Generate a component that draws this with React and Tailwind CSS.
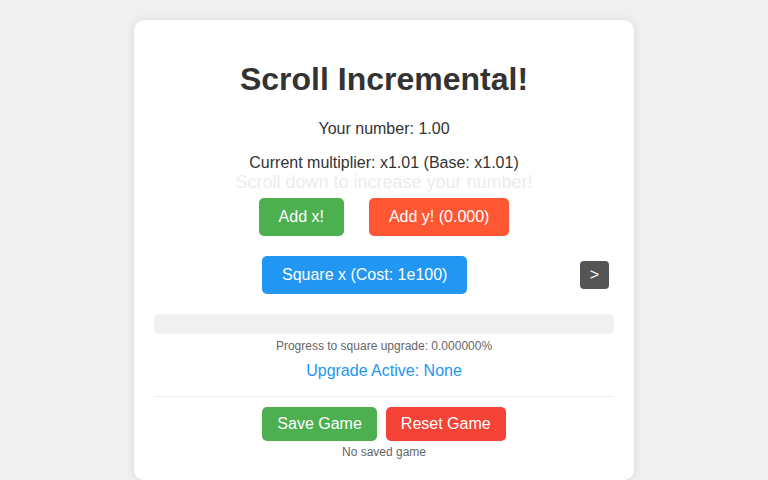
export default function App() {
    return (
        <div className="min-h-screen bg-[#f0f0f0] flex justify-center pt-5 font-['Liberation_Sans',Arial,sans-serif] text-[#333]">
            <div className="w-[500px] h-[460px] bg-white rounded-[10px] shadow-[0_0_10px_rgba(0,0,0,0.1)] px-5 pt-5 text-center">
                <h1 className="text-[32px] leading-[37px] font-bold mt-[21px] mb-[22px]">Scroll Incremental!</h1>

                <p className="text-base leading-[18px]">Your number: 1.00</p>
                <p className="text-base leading-[18px] mt-4">Current multiplier: x1.01 (Base: x1.01)</p>
                <p className="text-[18px] leading-[20px] text-[#ececec]">Scroll down to increase your number!</p>

                {/* Add buttons */}
                <div className="flex justify-center gap-[25px] mt-[6px]">
                    <button className="bg-[#4CAF50] text-white text-base leading-[18px] px-5 py-[10px] rounded-[5px]">Add x!</button>
                    <button className="bg-[#FF5733] text-white text-base leading-[18px] px-5 py-[10px] rounded-[5px]">Add y! (0.000)</button>
                </div>

                {/* Square upgrade */}
                <div className="flex items-center mt-5">
                    <button className="ml-[108px] bg-[#2196F3] text-white text-base leading-[18px] px-5 py-[10px] rounded-[5px]">Square x (Cost: 1e100)</button>
                    <button className="ml-auto mr-[5px] w-[29px] h-[28px] bg-[#555] text-white text-base rounded-[4px]">&gt;</button>
                </div>

                <div className="mt-5 h-5 bg-[#f0f0f0] rounded-[5px]"></div>
                <p className="text-xs leading-[14px] text-[#666] mt-[5px]">Progress to square upgrade: 0.000000%</p>
                <p className="text-base leading-[18px] text-[#2196F3] mt-[9px]">Upgrade Active: None</p>

                <div className="border-t border-[#eee] mt-4"></div>

                <div className="flex justify-center gap-[9px] mt-[10px]">
                    <button className="bg-[#4CAF50] text-white text-base leading-[18px] px-[15px] py-2 rounded-[5px]">Save Game</button>
                    <button className="bg-[#f44336] text-white text-base leading-[18px] px-[15px] py-2 rounded-[5px]">Reset Game</button>
                </div>
                <p className="text-xs leading-[14px] text-[#666] mt-1">No saved game</p>
            </div>
        </div>
    );
}
